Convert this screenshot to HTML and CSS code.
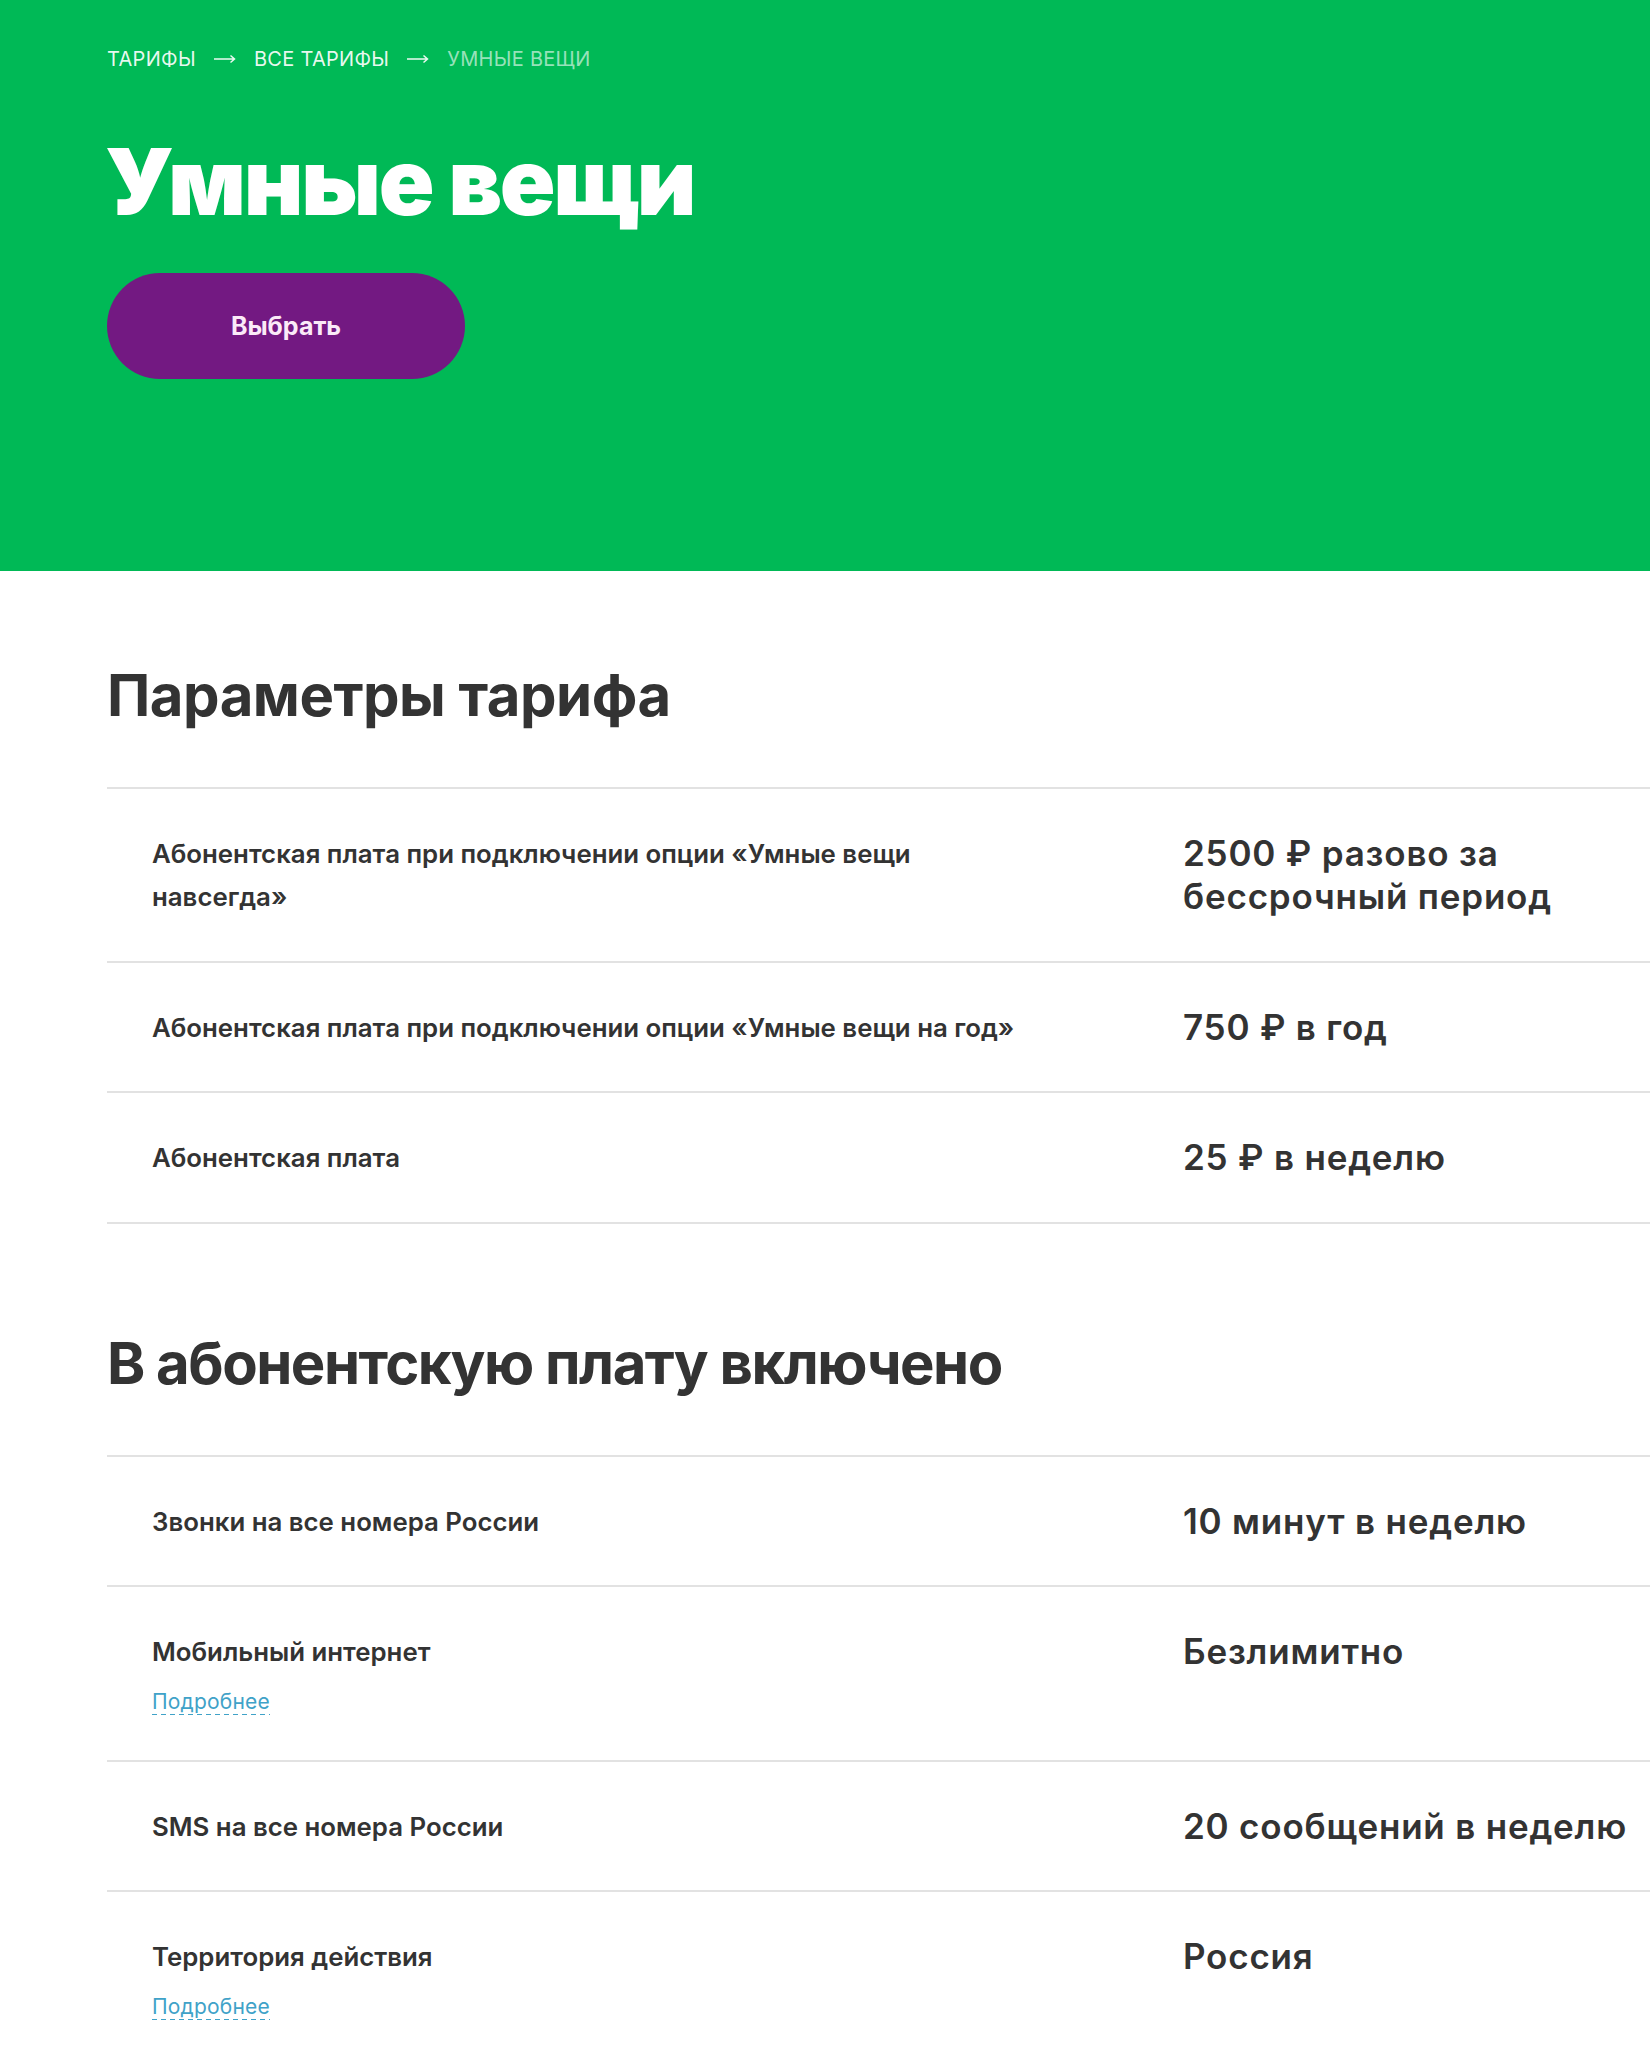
FILE: index.html
```html
<!DOCTYPE html>
<html lang="ru">
<head>
<meta charset="utf-8">
<title>Умные вещи</title>
<link rel="stylesheet" href="styles.css">
</head>
<body>
<header class="hero">
  <nav class="crumbs">
    <a class="crumb" href="#">ТАРИФЫ</a>
    <svg class="arrow" width="22" height="10" viewBox="0 0 22 10" aria-hidden="true"><path d="M0 5H20.5M16.5 1.5L20.5 5L16.5 8.5" fill="none" stroke="currentColor" stroke-width="1.5"/></svg>
    <a class="crumb" href="#">ВСЕ ТАРИФЫ</a>
    <svg class="arrow" width="22" height="10" viewBox="0 0 22 10" aria-hidden="true"><path d="M0 5H20.5M16.5 1.5L20.5 5L16.5 8.5" fill="none" stroke="currentColor" stroke-width="1.5"/></svg>
    <span class="crumb current">УМНЫЕ ВЕЩИ</span>
  </nav>
  <h1 class="hero-title">Умные вещи</h1>
  <button class="btn" type="button">Выбрать</button>
</header>

<main class="content">
  <section class="block">
    <h2 class="block-title">Параметры тарифа</h2>
    <div class="table">
      <div class="row">
        <div class="label">Абонентская плата при подключении опции «Умные вещи навсегда»</div>
        <div class="value">2500 ₽ разово за бессрочный период</div>
      </div>
      <div class="row">
        <div class="label">Абонентская плата при подключении опции «Умные вещи на год»</div>
        <div class="value">750 ₽ в год</div>
      </div>
      <div class="row">
        <div class="label">Абонентская плата</div>
        <div class="value">25 ₽ в неделю</div>
      </div>
    </div>
  </section>

  <section class="block">
    <h2 class="block-title block-title-wide">В абонентскую плату включено</h2>
    <div class="table">
      <div class="row">
        <div class="label">Звонки на все номера России</div>
        <div class="value">10 минут в неделю</div>
      </div>
      <div class="row">
        <div class="label">Мобильный интернет
          <div class="more"><a class="more-link" href="#">Подробнее</a></div>
        </div>
        <div class="value">Безлимитно</div>
      </div>
      <div class="row">
        <div class="label">SMS на все номера России</div>
        <div class="value">20 сообщений в неделю</div>
      </div>
      <div class="row">
        <div class="label">Территория действия
          <div class="more"><a class="more-link" href="#">Подробнее</a></div>
        </div>
        <div class="value">Россия</div>
      </div>
    </div>
  </section>
</main>
</body>
</html>
```

FILE: styles.css
```css
* { box-sizing: border-box; }

html, body {
  margin: 0;
  padding: 0;
  background: #ffffff;
}

body {
  font-family: Inter, "Noto Sans", "Liberation Sans", sans-serif;
  color: #333333;
  overflow-x: hidden;
}

.hero {
  background: #00b956;
  padding: 47px 0 192px 107px;
}

.crumbs {
  display: flex;
  align-items: center;
  gap: 18px;
  font-size: 20px;
  line-height: 24px;
  font-weight: 400;
  letter-spacing: 0.3px;
}

.crumb {
  color: rgba(255, 255, 255, 0.92);
  text-decoration: none;
}

.crumb.current {
  color: rgba(255, 255, 255, 0.6);
}

.arrow {
  display: block;
  color: rgba(255, 255, 255, 0.92);
}

.hero-title {
  margin: 60px 0 0 -2px;
  font-size: 92px;
  line-height: 101px;
  font-weight: 900;
  color: #ffffff;
  letter-spacing: -2.3px;
}

.btn {
  display: block;
  margin-top: 41px;
  width: 358px;
  height: 106px;
  border: none;
  border-radius: 53px;
  background: #731982;
  color: #fbeaf8;
  font-family: Inter, "Noto Sans", "Liberation Sans", sans-serif;
  font-size: 25px;
  font-weight: 700;
  cursor: pointer;
}

.content {
  padding-left: 107px;
}

.block-title {
  margin: 0;
  font-size: 58px;
  line-height: 70px;
  font-weight: 700;
  color: #333333;
  letter-spacing: -0.5px;
}

.block-title-wide {
  letter-spacing: -1.5px;
}

.block:first-child .block-title {
  margin-top: 89px;
}

.block + .block .block-title {
  margin-top: 104px;
}

.table {
  margin-top: 57px;
  border-top: 2px solid #e2e2e2;
}

.row {
  display: grid;
  grid-template-columns: 880px 1fr;
  column-gap: 151px;
  padding: 43px 0 42.5px 45px;
  border-bottom: 2px solid #e2e2e2;
  align-items: start;
}

.label {
  font-size: 25.8px;
  line-height: 43px;
  font-weight: 600;
  color: #333333;
}

.value {
  font-size: 35px;
  line-height: 43px;
  font-weight: 600;
  letter-spacing: 0.8px;
  color: #333333;
}

.more {
  margin-top: 12px;
  line-height: 30px;
}

.more-link {
  font-size: 21px;
  font-weight: 400;
  color: #3fa2c8;
  text-decoration: none;
  letter-spacing: 0.2px;
  padding-bottom: 1px;
  background-image: linear-gradient(to right, #3fa2c8 55%, transparent 55%);
  background-size: 9px 1.5px;
  background-repeat: repeat-x;
  background-position: left bottom;
}
```
